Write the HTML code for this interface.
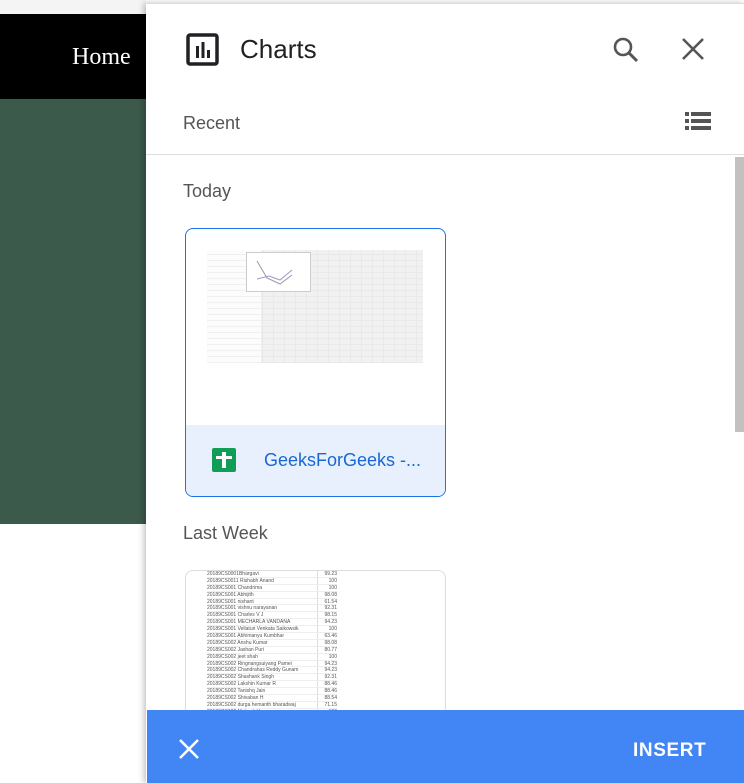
<!DOCTYPE html>
<html><head><style>
*{margin:0;padding:0;box-sizing:border-box}
body{width:744px;height:783px;position:relative;overflow:hidden;background:#fff;font-family:"Liberation Sans",Roboto,sans-serif}
.abs{position:absolute}
.row{height:6.9px;font-size:5px;line-height:6.9px;color:#555;border-bottom:1px solid #eee;white-space:nowrap;display:flex}
.row span:last-child{width:20px;text-align:right;border-left:1px solid #ddd}
</style></head><body>
<div class="abs" style="left:0;top:0;width:146px;height:14px;background:#f4f4f4"></div>
<div class="abs" style="left:0;top:14px;width:146px;height:85px;background:#000"></div>
<div class="abs" style="left:72px;top:44px;color:#fff;font-family:'Liberation Serif',serif;font-size:24px">Home</div>
<div class="abs" style="left:0;top:99px;width:146px;height:425px;background:#3b5a4b"></div>
<div class="abs" style="left:146px;top:3px;width:598px;height:780px;background:#fff;border-top:1px solid #ddd;box-shadow:-2px 0 6px rgba(0,0,0,.25)">
 <svg class="abs" style="left:40px;top:29px" width="34" height="34" viewBox="0 0 34 34"><rect x="2" y="2" width="29" height="29" rx="2" fill="none" stroke="#202124" stroke-width="3.5"/><rect x="10" y="13" width="3" height="12" fill="#202124"/><rect x="15.5" y="9" width="3" height="16" fill="#202124"/><rect x="21" y="17" width="3" height="8" fill="#202124"/></svg>
 <div class="abs" style="left:94px;top:30px;font-size:26px;color:#202124">Charts</div>
 <svg class="abs" style="left:465px;top:31px" width="30" height="30" viewBox="0 0 30 30"><circle cx="12" cy="12" r="8" fill="none" stroke="#555" stroke-width="2.6"/><line x1="18" y1="18" x2="26" y2="26" stroke="#555" stroke-width="3"/></svg>
 <svg class="abs" style="left:535px;top:33px" width="24" height="24" viewBox="0 0 24 24"><path d="M2 2L22 22M22 2L2 22" stroke="#555" stroke-width="2.6"/></svg>
 <div class="abs" style="left:37px;top:109px;font-size:18px;color:#555">Recent</div>
 <svg class="abs" style="left:538px;top:106px" width="28" height="22" viewBox="0 0 28 22"><rect x="1" y="2" width="4" height="4" fill="#555"/><rect x="7" y="2" width="20" height="4" fill="#555"/><rect x="1" y="9" width="4" height="4" fill="#555"/><rect x="7" y="9" width="20" height="4" fill="#555"/><rect x="1" y="16" width="4" height="4" fill="#555"/><rect x="7" y="16" width="20" height="4" fill="#555"/></svg>
 <div class="abs" style="left:0;top:150px;width:598px;height:1px;background:#ddd"></div>
 <div class="abs" style="left:589px;top:153px;width:9px;height:275px;background:#c1c1c1"></div>
 <div class="abs" style="left:37px;top:177px;font-size:18px;color:#555">Today</div>
 <div class="abs" style="left:39px;top:224px;width:261px;height:269px;border:1px solid #1a73e8;border-radius:8px;overflow:hidden;background:#fff">
  <div class="abs" style="left:21px;top:21px;width:216px;height:113px;background:#f1f1f1;background-image:repeating-linear-gradient(0deg,#e9e9e9 0 1px,transparent 1px 6px),repeating-linear-gradient(90deg,#e9e9e9 0 1px,transparent 1px 11px)"></div>
  <div class="abs" style="left:21px;top:21px;width:54px;height:113px;background:#fcfcfc;background-image:repeating-linear-gradient(0deg,#f0f0f0 0 1px,transparent 1px 6px)"></div>
  <div class="abs" style="left:60px;top:23px;width:65px;height:40px;background:#fff;border:1px solid #ccc">
   <svg width="63" height="38"><polyline points="10,8 20,25 33,31 45,22" fill="none" stroke="#99a" stroke-width="1"/><polyline points="10,26 22,23 33,27 45,17" fill="none" stroke="#99c" stroke-width="1"/></svg>
  </div>
  <div class="abs" style="left:0;top:196px;width:261px;height:73px;background:#e8f0fe"></div>
  <div class="abs" style="left:26px;top:219px;width:24px;height:24px;background:#0f9d58;border-radius:2px"><div class="abs" style="left:10px;top:4px;width:4px;height:16px;background:#fff"></div><div class="abs" style="left:4px;top:8px;width:16px;height:3px;background:#fff"></div></div>
  <div class="abs" style="left:78px;top:221px;font-size:18px;color:#1967d2">GeeksForGeeks -...</div>
 </div>
 <div class="abs" style="left:37px;top:519px;font-size:18px;color:#555">Last Week</div>
 <div class="abs" style="left:39px;top:566px;width:261px;height:160px;border:1px solid #ddd;border-radius:8px;overflow:hidden;background:#fff">
  <div class="abs" style="left:21px;top:0;width:130px">
   <div class="row"><span style="width:110px">20189CS0001Bhargavi</span><span>99.23</span></div>
   <div class="row"><span style="width:110px">20189CS0011 Rishabh Anand</span><span>100</span></div>
   <div class="row"><span style="width:110px">20189CS001 Chandrima</span><span>100</span></div>
   <div class="row"><span style="width:110px">20189CS001 Abhijith</span><span>98.08</span></div>
   <div class="row"><span style="width:110px">20189CS001 nishant</span><span>61.54</span></div>
   <div class="row"><span style="width:110px">20189CS001 vishnu narayanan</span><span>92.31</span></div>
   <div class="row"><span style="width:110px">20189CS001 Charles V J</span><span>98.15</span></div>
   <div class="row"><span style="width:110px">20189CS001 MECHARLA VANDANA</span><span>94.23</span></div>
   <div class="row"><span style="width:110px">20189CS001 Vellaturi Venkata Saikowsik</span><span>100</span></div>
   <div class="row"><span style="width:110px">20189CS001 Abhimanyu Kumbhar</span><span>63.46</span></div>
   <div class="row"><span style="width:110px">20189CS002 Anshu Kumar</span><span>98.08</span></div>
   <div class="row"><span style="width:110px">20189CS002 Jashan Puri</span><span>80.77</span></div>
   <div class="row"><span style="width:110px">20189CS002 jeet shah</span><span>100</span></div>
   <div class="row"><span style="width:110px">20189CS002 Ringnangsuiyang Pamei</span><span>94.23</span></div>
   <div class="row"><span style="width:110px">20189CS002 Chandrahas Reddy Gunam</span><span>94.23</span></div>
   <div class="row"><span style="width:110px">20189CS002 Shashank Singh</span><span>92.31</span></div>
   <div class="row"><span style="width:110px">20189CS002 Lakshin Kumar R</span><span>88.46</span></div>
   <div class="row"><span style="width:110px">20189CS002 Tanishq Jain</span><span>88.46</span></div>
   <div class="row"><span style="width:110px">20189CS002 Shivaban H</span><span>88.54</span></div>
   <div class="row"><span style="width:110px">20189CS002 durga hemanth bharadwaj</span><span>71.15</span></div>
   <div class="row"><span style="width:110px">20189CS002 Mahesh Varam</span><span>100</span></div>
  </div>
 </div>
</div>
<div class="abs" style="left:147px;top:710px;width:597px;height:73px;background:#4285f4">
 <svg class="abs" style="left:31px;top:28px" width="22" height="22" viewBox="0 0 22 22"><path d="M2 2L20 20M20 2L2 20" stroke="#fff" stroke-width="2.6"/></svg>
 <div class="abs" style="left:486px;top:30px;font-size:19px;font-weight:bold;color:#fff;letter-spacing:.6px">INSERT</div>
</div>
</body></html>
